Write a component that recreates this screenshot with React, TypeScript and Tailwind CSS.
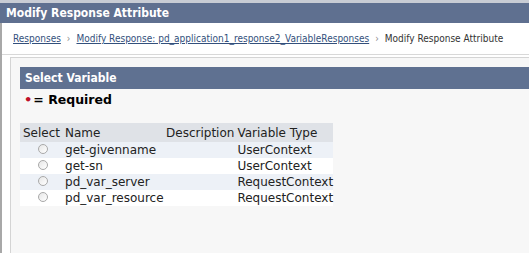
const rows = [
  { name: "get-givenname", type: "UserContext" },
  { name: "get-sn", type: "UserContext" },
  { name: "pd_var_server", type: "RequestContext" },
  { name: "pd_var_resource", type: "RequestContext" },
];

function Radio() {
  return (
    <span className="inline-block w-[10px] h-[10px] rounded-full border border-[#a9a9a9] bg-gradient-to-br from-[#e6e6e6] to-[#ffffff]" />
  );
}

export default function App() {
  return (
    <div className="w-[529px] h-[253px] overflow-hidden bg-white font-['DejaVu_Sans',sans-serif]">
      <div className="h-[3px] bg-[#c8ccd4]" />
      <div className="h-[20px] bg-[#5f7090] text-white font-bold text-[12px] leading-[20px] pl-[6px] font-['DejaVu_Sans_Condensed',sans-serif]">
        Modify Response Attribute
      </div>

      <div className="border-l-2 border-[#a8a8a8] h-[230px]">
        <div className="h-[32px] flex items-center pl-[11px] text-[10px] text-[#333] border-b border-[#d8d8d8] whitespace-nowrap font-['DejaVu_Sans_Condensed',sans-serif]">
          <a className="text-[#33507c] underline">Responses</a>
          <span className="mx-[6px] text-[#888]">›</span>
          <a className="text-[#33507c] underline">Modify Response: pd_application1_response2_VariableResponses</a>
          <span className="mx-[6px] text-[#888]">›</span>
          <span>Modify Response Attribute</span>
        </div>

        <div className="ml-[8px] mt-[2px] h-[200px] bg-[#f7f7f7] border-l border-t border-[#d4d4d4] pl-[9px] pt-[9px]">
          <div className="h-[22px] bg-[#5f7191] text-white font-bold text-[12px] leading-[22px] pl-[5px] font-['DejaVu_Sans_Condensed',sans-serif]">
            Select Variable
          </div>
          <div className="h-[22px] flex items-center pl-[4px] text-[12.5px] font-bold text-black">
            <span className="text-[#c0102a] text-[13px] mr-[1px]">•</span>= Required
          </div>
          <table className="mt-[12px] text-[12px] text-[#222] border-collapse">
            <thead>
              <tr className="bg-[#dfe2e7] h-[19px]">
                <th className="font-normal text-left pl-[3px] pr-[5px]">Select</th>
                <th className="font-normal text-left w-[101px]">Name</th>
                <th className="font-normal text-left pr-[3px]">Description</th>
                <th className="font-normal text-left">Variable Type</th>
              </tr>
            </thead>
            <tbody>
              {rows.map((r, i) => (
                <tr key={r.name} className={`h-[16px] ${i % 2 === 0 ? "bg-[#edf1f7]" : "bg-white"}`}>
                  <td className="text-center leading-none"><Radio /></td>
                  <td className="leading-[16px]">{r.name}</td>
                  <td />
                  <td className="leading-[16px]">{r.type}</td>
                </tr>
              ))}
            </tbody>
          </table>
        </div>
      </div>
    </div>
  );
}
